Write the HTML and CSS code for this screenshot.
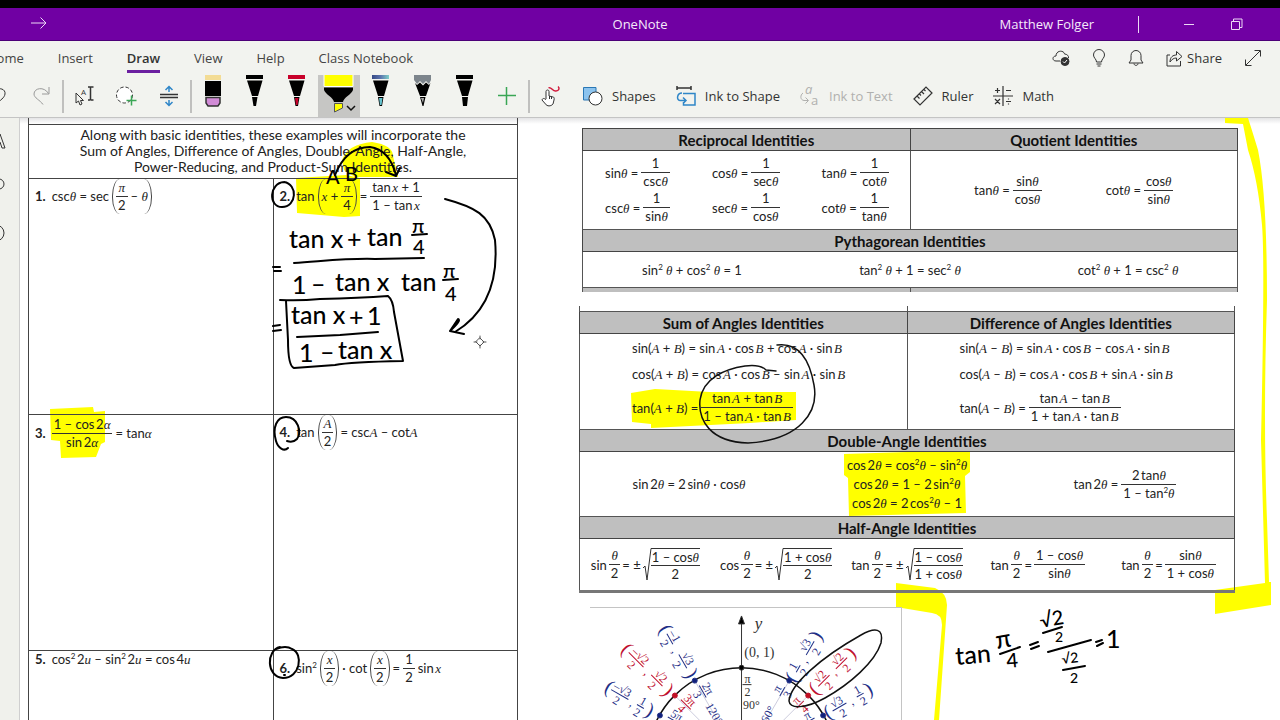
FILE: index.html
```html
<!DOCTYPE html>
<html lang="en">
  <head>
    <meta charset="UTF-8" />
    <meta name="viewport" content="width=device-width, initial-scale=1.0" />
    <title>OneNote</title>
    <link rel="stylesheet" href="styles.css">
  </head>
  <body>
    <header class="titlebar">
      <div class="history">
        <button class="icon-btn" aria-label="Forward">
          <svg width="16" height="12" viewBox="0 0 16 12"><path d="M0 6H15M9.500 .5L15 6L9.500 11.500" /></svg>
        </button>
      </div>
      <h1 class="app-name">OneNote</h1>
      <div class="account">
        <span>Matthew Folger</span>
        <span class="bar"></span>
        <button class="icon-btn" aria-label="Minimize">
          <svg width="12" height="12" viewBox="0 0 12 12"><path d="M1 6.500H11" /></svg>
        </button>
        <button class="icon-btn" aria-label="Restore">
          <svg width="12" height="12" viewBox="0 0 12 12"><path d="M.5 3.500H8.500V11.500H.5ZM2.500 3V1H11V9.500H9" /></svg>
        </button>
      </div>
    </header>

    <nav class="tabs">
      <a href="#home">Home</a>
      <a href="#insert">Insert</a>
      <a href="#draw" class="active">Draw</a>
      <a href="#view">View</a>
      <a href="#help">Help</a>
      <a href="#class">Class Notebook</a>
      <div class="tab-actions">
        <button class="icon-btn" aria-label="Sync status">
          <svg width="18" height="18" viewBox="0 0 18 18"><path d="M8 12H4C0 12 0 7 4 7C4 1 12 1 12.500 5C15 5 17 7 16.500 9" /><circle cx="13" cy="12.500" r="4" fill="#333" /><path class="white" d="M11 12.500L12.500 14L15 11" /></svg>
        </button>
        <button class="icon-btn" aria-label="Tips">
          <svg width="14" height="18" viewBox="0 0 14 18"><path d="M4.500 13C4.500 10 1.500 9 1.500 6A5.500 5.500 0 0 1 12.500 6C12.500 9 9.500 10 9.500 13ZM4.500 15H9.500M5.500 17H8.500" /></svg>
        </button>
        <button class="icon-btn" aria-label="Notifications">
          <svg width="16" height="18" viewBox="0 0 16 18"><path d="M1 14H15L13 11V6.500A5 5 0 0 0 3 6.500V11ZM6 14.500C6 17 10 17 10 14.500" /></svg>
        </button>
        <button class="share">
          <svg width="17" height="18" viewBox="0 0 17 18"><path d="M4 6H1V17H14.500V12M4 13C4 8 7 6 10.500 6V2.500L16 7.500L10.500 12V9C8 9 6 10 4 13Z" /></svg>
          Share
        </button>
        <button class="icon-btn" aria-label="Full screen">
          <svg width="18" height="18" viewBox="0 0 18 18"><path d="M2 16L16 2M10.500 1.500H16.500V7.500M1.500 10.500V16.500H7.500" /></svg>
        </button>
      </div>
    </nav>

    <div class="toolbar">
      <button class="tool undo" aria-label="Undo">
        <svg width="18" height="20" viewBox="0 0 18 20"><path d="M1 2V8H7M1.500 8C6 0 16 2 15 8C14.500 12 10 14 7 18" /></svg>
      </button>
      <button class="tool redo" aria-label="Redo">
        <svg width="18" height="20" viewBox="0 0 18 20"><path d="M17 1V8H10M16.500 7.500C12 0 2 2 2 8C2 12 8 14 11 18.500" /></svg>
      </button>
      <span class="divider"></span>
      <button class="tool" aria-label="Select objects or type text">
        <svg width="20" height="20" viewBox="0 0 20 20"><path d="M1 7V17L3.500 15L5 19L7 18L5.500 14.500H8.500Z" /><text class="tiny" x="6" y="9">A</text><path d="M13 1H15.500M18.500 1H16L15.500 1.500V13.500L15 14H13M16 14H18.500" stroke-width="1.500" /></svg>
      </button>
      <button class="tool" aria-label="Lasso select">
        <svg width="22" height="22" viewBox="0 0 22 22"><circle cx="8.500" cy="10" r="8" stroke-dasharray="3.500 2" fill="#fff" /><path class="green" d="M15.500 10.500V20.500M10.500 15.500H20.500" stroke-width="1.500" /></svg>
      </button>
      <button class="tool" aria-label="Insert space">
        <svg width="18" height="22" viewBox="0 0 18 22"><path d="M0 9.500H18M0 12.500H18" stroke-width="1.500" /><path class="blue" d="M9 7V1.500M5.500 5L9 1.500L12.500 5M9 15V20.500M5.500 17L9 20.500L12.500 17" stroke-width="1.500" /></svg>
      </button>
      <span class="divider"></span>
      <button class="tool pen" aria-label="Eraser">
        <svg width="18" height="34" viewBox="0 0 18 34"><path class="fill" fill="#f3dc95" d="M1 0H17V5H1Z" /><path class="fill" d="M1 6H17V21H1Z" /><path fill="#d18bd6" d="M2 22.500H16V28L14 31H4L2 28Z" stroke-width="1.500" /></svg>
      </button>
      <button class="tool pen" aria-label="Black pen">
        <svg width="18" height="34" viewBox="0 0 18 34"><path class="fill" d="M0 0H17V4H0ZM1 5.500H16.500L12 21H6ZM6 22H11.500L10 31H7.500Z" /></svg>
      </button>
      <button class="tool pen" aria-label="Red pen">
        <svg width="18" height="34" viewBox="0 0 18 34"><path class="fill" fill="#c8002a" d="M0 0H17V4H0Z" /><path class="fill" d="M1 5.500H16.500L12 21H6ZM6 22H11.500L10 31H7.500Z" /><path class="fill" fill="#c8002a" d="M7 23H10.500L9.500 30H8Z" /></svg>
      </button>
      <button class="tool pen selected" aria-label="Yellow highlighter">
        <svg width="36" height="38" viewBox="0 0 36 38"><path class="fill" fill="#ffff00" d="M3 0H32V11H3Z" /><path d="M3 0V11.500H32V0" stroke="#fff" /><path class="fill" d="M3 12.500H32V15C30 20 23 22 22 27H13C12 22 5 20 3 15Z" /><path fill="#ffff00" stroke="#555" d="M13.500 28.500H21.500V33L13.500 37Z" /><path d="M26 31L30 35L34 31" stroke="#111" stroke-width="1.500" /></svg>
      </button>
      <button class="tool pen" aria-label="Galaxy pen">
        <svg width="18" height="34" viewBox="0 0 18 34"><defs><linearGradient id="galaxy"><stop offset="0" stop-color="#364a86" /><stop offset=".5" stop-color="#5b73ad" /><stop offset="1" stop-color="#7fd0c8" /></linearGradient></defs><path class="fill" fill="url(#galaxy)" d="M0 0H17V4H0Z" /><path class="fill" d="M1 5.500H16.500L12 21H6ZM6 22H11.500L10 31H7.500Z" /><path class="fill" fill="#66c4cf" d="M7 23H10.500L9.500 30H8Z" /></svg>
      </button>
      <button class="tool pen" aria-label="Pencil">
        <svg width="18" height="34" viewBox="0 0 18 34"><path class="fill" fill="#7d858c" d="M0 0H17V5L15 9L12 6L9 9L6 6L3 9L0 5Z" /><path class="fill" d="M1 8L3 10L6 7.500L9 10.500L12 7.500L15 10L16.500 8L12 21H6ZM6 22H11.500L9.500 31H8.500Z" /><path class="fill" fill="#aaa" d="M7 23H10L9 28Z" /></svg>
      </button>
      <button class="tool pen" aria-label="Black marker">
        <svg width="18" height="34" viewBox="0 0 18 34"><path class="fill" d="M0 0H17V4H0ZM1 5.500H16.500L12 21H6ZM6 22H12L11 31H7Z" /></svg>
      </button>
      <button class="tool" aria-label="Add pen">
        <svg width="20" height="20" viewBox="0 0 20 20"><path class="green" d="M9.500 1V19M1 9.500H19" stroke-width="1.500" /></svg>
      </button>
      <span class="divider"></span>
      <button class="tool" aria-label="Draw with touch">
        <svg width="20" height="22" viewBox="0 0 20 22"><path d="M5 14V6.500C5 4.500 8 4.500 8 6.500V11L12 12C13 12 13.500 13 13 15L12 19C10 21.500 6 21.500 4.500 19L1 15C1.500 13 3.500 13 5 15" fill="#fff" /><path d="M8.500 11V14M10.500 11.500V14" /><path class="red" d="M7.500 3C10 1 12 7 15 6C18 6 19 3 17 1.500" stroke-width="1.500" /></svg>
      </button>
      <div class="labelled">
        <button class="text-tool">
          <svg width="20" height="20" viewBox="0 0 20 20"><path fill="#8cc3ee" stroke="#2a77b5" d="M.5 1.500H13V14H.5Z" /><circle cx="12.500" cy="12.500" r="6.500" fill="#fff" /></svg>
          Shapes
        </button>
        <button class="text-tool">
          <svg width="20" height="20" viewBox="0 0 20 20"><path d="M1 2H15M1 0V4M15 0V4" stroke-width="1.500" /><path class="blue" d="M7 7.500H19V19H7.500V16M6 7C1 7 0 14 4 14.500H9M7 11.500L10 14.500L7 17.500" stroke-width="1.500" /></svg>
          Ink to Shape
        </button>
        <button class="text-tool" disabled>
          <svg width="20" height="20" viewBox="0 0 20 20"><text class="letter slant" x="5" y="8">a</text><text class="letter" x="11" y="19">a</text><path d="M3 7C0 9 0 14 4 14.500H8M5.500 11.500L8.500 14.500L5.500 17.500" /></svg>
          Ink to Text
        </button>
        <button class="text-tool">
          <svg width="20" height="20" viewBox="0 0 20 20"><path d="M1 13L13 1L19 7L7 19ZM4 10L6.500 12.500M6.500 8L8 9.500M8.500 5.500L11 8M11 3.500L12.500 5" stroke-width="1.200" /></svg>
          Ruler
        </button>
        <button class="text-tool">
          <svg width="20" height="20" viewBox="0 0 20 20"><path d="M10 0V20M0 10H20M2 4.500H7M4.500 2V7M13 4.500H18M2 13L7 18M7 13L2 18M13 15.500H18M15.500 12.500V13.500M15.500 17.500V18.500" stroke-width="1.200" /></svg>
          Math
        </button>
      </div>
    </div>

    <main class="workspace">
      <aside class="rail">
        <svg width="20" height="140" viewBox="0 0 20 140"><path d="M-5 30L0 16L5 30H2L0 24" /><circle cx="-1" cy="66" r="5" /><circle cx="-4" cy="115" r="8" /></svg>
      </aside>

      <!-- highlighter strokes, kept below the print -->
      <svg class="ink highlight" width="1280" height="602" viewBox="0 118 1280 602">
        <path d="M296 178L346 175L360 178V216L344 217L297 213Z" />
        <path d="M342 160Q348 144 372 142Q393 145 393 156L398 177H355L344 170Z" />
        <path d="M50 409L93 407L94 412L105 411V442L101 444L96 457L61 458L60 441L51 440Z" />
        <path d="M631 393L655 389L710 392H796V420L750 423L651 428V424L632 422Z" />
        <path d="M844 454L970 450V472L965 476L966 513L849 516L848 478L844 475Z" />
        <path d="M1225 118H1248Q1251 127 1258 150Q1267 195 1267 300Q1263 420 1267 520L1269 582H1271V605L1215 614V590L1265 583L1261 440Q1265 260 1262 225Q1258 180 1248 150L1243 124L1225 123Z" />
        <path d="M896 583L935 588Q947 593 947 605L939 720H934L942 625Q942 614 932 613L896 607Z" />
      </svg>

      <table class="worksheet">
        <tr class="sliver"><td colspan="2"></td></tr>
        <tr class="intro">
          <th colspan="2">Along with basic identities, these examples will incorporate the<br>Sum of Angles, Difference of Angles, Double-Angle, Half-Angle,<br>Power-Reducing, and Product-Sum Identities.</th>
        </tr>
        <tr>
          <td><div class="eq"><b>1.</b><span>csc<i>θ</i> = sec</span><span class="group"><span class="frac"><i>π</i><span>2</span></span><span>– <i>θ</i></span></span></div></td>
          <td><div class="eq"><b>2.</b><span>tan</span><span class="group"><span><i>x</i> +</span><span class="frac"><i>π</i><span>4</span></span></span><span>=</span><span class="frac"><span>tan&thinsp;<i>x</i> + 1</span><span>1 – tan&thinsp;<i>x</i></span></span></div></td>
        </tr>
        <tr>
          <td class="low"><div class="eq"><b>3.</b><span class="frac"><span>1 – cos&thinsp;2<i>α</i></span><span>sin&thinsp;2<i>α</i></span></span><span>= tan<i>α</i></span></div></td>
          <td><div class="eq"><b>4.</b><span>tan</span><span class="group"><span class="frac"><i>A</i><span>2</span></span></span><span>= csc<i>A</i> – cot<i>A</i></span></div></td>
        </tr>
        <tr>
          <td><div class="eq"><b>5.</b><span>cos<sup>2</sup>&thinsp;2<i>u</i> – sin<sup>2</sup>&thinsp;2<i>u</i> = cos&thinsp;4<i>u</i></span></div></td>
          <td><div class="eq"><b>6.</b><span>sin<sup>2</sup></span><span class="group"><span class="frac"><i>x</i><span>2</span></span></span><span>· cot</span><span class="group"><span class="frac"><i>x</i><span>2</span></span></span><span>=</span><span class="frac"><span>1</span><span>2</span></span><span>sin&thinsp;<i>x</i></span></div></td>
        </tr>
      </table>

      <div class="references">
        <table class="sheet reciprocal">
          <tr><th>Reciprocal Identities</th><th>Quotient Identities</th></tr>
          <tr class="tall">
            <td>
              <div class="thirds">
                <span class="eq"><span>sin<i>θ</i> =</span><span class="frac"><span>1</span><span>csc<i>θ</i></span></span></span>
                <span class="eq"><span>cos<i>θ</i> =</span><span class="frac"><span>1</span><span>sec<i>θ</i></span></span></span>
                <span class="eq"><span>tan<i>θ</i> =</span><span class="frac"><span>1</span><span>cot<i>θ</i></span></span></span>
                <span class="eq"><span>csc<i>θ</i> =</span><span class="frac"><span>1</span><span>sin<i>θ</i></span></span></span>
                <span class="eq"><span>sec<i>θ</i> =</span><span class="frac"><span>1</span><span>cos<i>θ</i></span></span></span>
                <span class="eq"><span>cot<i>θ</i> =</span><span class="frac"><span>1</span><span>tan<i>θ</i></span></span></span>
              </div>
            </td>
            <td>
              <div class="spread">
                <span class="eq"><span>tan<i>θ</i> =</span><span class="frac"><span>sin<i>θ</i></span><span>cos<i>θ</i></span></span></span>
                <span class="eq"><span>cot<i>θ</i> =</span><span class="frac"><span>cos<i>θ</i></span><span>sin<i>θ</i></span></span></span>
              </div>
            </td>
          </tr>
          <tr><th colspan="2">Pythagorean Identities</th></tr>
          <tr class="short">
            <td colspan="2">
              <div class="thirds">
                <span>sin<sup>2</sup> <i>θ</i> + cos<sup>2</sup> <i>θ</i> = 1</span>
                <span>tan<sup>2</sup> <i>θ</i> + 1 = sec<sup>2</sup> <i>θ</i></span>
                <span>cot<sup>2</sup> <i>θ</i> + 1 = csc<sup>2</sup> <i>θ</i></span>
              </div>
            </td>
          </tr>
          <tr class="cut"><td></td><td></td></tr>
        </table>

        <table class="sheet angles">
          <tr class="gap"><td></td><td></td></tr>
          <tr><th>Sum of Angles Identities</th><th>Difference of Angles Identities</th></tr>
          <tr class="sums">
            <td>
              <div class="lines">
                <span>sin(<i>A</i> + <i>B</i>) = sin&thinsp;<i>A</i> · cos&thinsp;<i>B</i> + cos&thinsp;<i>A</i> · sin&thinsp;<i>B</i></span>
                <span>cos(<i>A</i> + <i>B</i>) = cos&thinsp;<i>A</i> · cos&thinsp;<i>B</i> – sin&thinsp;<i>A</i> · sin&thinsp;<i>B</i></span>
                <span class="eq"><span>tan(<i>A</i> + <i>B</i>) =</span><span class="frac"><span>tan&thinsp;<i>A</i> + tan&thinsp;<i>B</i></span><span>1 – tan&thinsp;<i>A</i> · tan&thinsp;<i>B</i></span></span></span>
              </div>
            </td>
            <td>
              <div class="lines">
                <span>sin(<i>A</i> – <i>B</i>) = sin&thinsp;<i>A</i> · cos&thinsp;<i>B</i> – cos&thinsp;<i>A</i> · sin&thinsp;<i>B</i></span>
                <span>cos(<i>A</i> – <i>B</i>) = cos&thinsp;<i>A</i> · cos&thinsp;<i>B</i> + sin&thinsp;<i>A</i> · sin&thinsp;<i>B</i></span>
                <span class="eq"><span>tan(<i>A</i> – <i>B</i>) =</span><span class="frac"><span>tan&thinsp;<i>A</i> – tan&thinsp;<i>B</i></span><span>1 + tan&thinsp;<i>A</i> · tan&thinsp;<i>B</i></span></span></span>
              </div>
            </td>
          </tr>
          <tr><th colspan="2">Double-Angle Identities</th></tr>
          <tr class="double">
            <td colspan="2">
              <div class="thirds">
                <span>sin&thinsp;2<i>θ</i> = 2&thinsp;sin<i>θ</i> · cos<i>θ</i></span>
                <span class="stack"><span>cos&thinsp;2<i>θ</i> = cos<sup>2</sup><i>θ</i> – sin<sup>2</sup><i>θ</i></span><span>cos&thinsp;2<i>θ</i> = 1 – 2&thinsp;sin<sup>2</sup><i>θ</i></span><span>cos&thinsp;2<i>θ</i> = 2&thinsp;cos<sup>2</sup><i>θ</i> – 1</span></span>
                <span class="eq"><span>tan&thinsp;2<i>θ</i> =</span><span class="frac"><span>2&thinsp;tan<i>θ</i></span><span>1 – tan<sup>2</sup><i>θ</i></span></span></span>
              </div>
            </td>
          </tr>
          <tr><th colspan="2">Half-Angle Identities</th></tr>
          <tr class="half">
            <td colspan="2">
              <div class="fifths">
                <span class="eq"><span>sin</span><span class="frac"><i>θ</i><span>2</span></span><span>= ±</span><span class="root"><svg width="8" height="33" viewBox="0 0 8 33"><path d="M0 20L2 18L4 32L8 .5" /></svg><span class="frac"><span>1 – cos<i>θ</i></span><span>2</span></span></span></span>
                <span class="eq"><span>cos</span><span class="frac"><i>θ</i><span>2</span></span><span>= ±</span><span class="root"><svg width="8" height="33" viewBox="0 0 8 33"><path d="M0 20L2 18L4 32L8 .5" /></svg><span class="frac"><span>1 + cos<i>θ</i></span><span>2</span></span></span></span>
                <span class="eq"><span>tan</span><span class="frac"><i>θ</i><span>2</span></span><span>= ±</span><span class="root"><svg width="8" height="33" viewBox="0 0 8 33"><path d="M0 20L2 18L4 32L8 .5" /></svg><span class="frac"><span>1 – cos<i>θ</i></span><span>1 + cos<i>θ</i></span></span></span></span>
                <span class="eq"><span>tan</span><span class="frac"><i>θ</i><span>2</span></span><span>=</span><span class="frac"><span>1 – cos<i>θ</i></span><span>sin<i>θ</i></span></span></span>
                <span class="eq"><span>tan</span><span class="frac"><i>θ</i><span>2</span></span><span>=</span><span class="frac"><span>sin<i>θ</i></span><span>1 + cos<i>θ</i></span></span></span>
              </div>
            </td>
          </tr>
        </table>

        <svg class="unit-circle" width="312" height="200" viewBox="590 607 312 200">
          <circle cx="742" cy="762" r="95" class="ring" />
          <path class="spoke" d="M742 762L695 680M742 762L675 695M742 762L790 680M742 762L809 695" />
          <path d="M742 807V618" />
          <path class="dot" d="M742 615L739 623H745Z" />
          <circle class="dot" cx="742" cy="667" r="2.500" />
          <g class="navy">
            <circle cx="695" cy="680" r="2.500" /><circle cx="790" cy="680" r="2.500" /><circle cx="660" cy="715" r="2.500" /><circle cx="824" cy="715" r="2.500" />
          </g>
          <g class="crimson"><circle cx="675" cy="695" r="2.500" /><circle cx="809" cy="695" r="2.500" /></g>
          <text class="axis" x="759" y="628">y</text>
          <text class="point" x="760" y="656">(0, 1)</text>
          <text x="748" y="682">π</text><path d="M743 684H752" /><text x="748" y="695">2</text>
          <text x="752" y="709">90°</text>
          <g class="navy">
            <g transform="translate(806 656) rotate(-60)"><text class="paren" x="-25" y="5">(</text><text x="-14" y="-2">1</text><path d="M-18 0H-10" /><text x="-14" y="11">2</text><text x="-4" y="5">,</text><text x="10" y="-2">√3</text><path d="M2 0H18" /><text x="10" y="11">2</text><text class="paren" x="24" y="5">)</text></g>
            <g transform="translate(850 701) rotate(-30)"><text class="paren" x="-24" y="5">(</text><text x="-11" y="-2">√3</text><path d="M-19 0H-3" /><text x="-11" y="11">2</text><text x="2" y="5">,</text><text x="13" y="-2">1</text><path d="M9 0H17" /><text x="13" y="11">2</text><text class="paren" x="23" y="5">)</text></g>
            <g transform="translate(678 652) rotate(60)"><text class="paren" x="-27" y="5">(</text><text x="-16" y="-2">–1</text><path d="M-22 0H-10" /><text x="-15" y="11">2</text><text x="-3" y="5">,</text><text x="10" y="-2">√3</text><path d="M2 0H18" /><text x="10" y="11">2</text><text class="paren" x="25" y="5">)</text></g>
            <g transform="translate(630 700) rotate(30)"><text class="paren" x="-25" y="5">(</text><text x="-12" y="-2">–√3</text><path d="M-22 0H-2" /><text x="-12" y="11">2</text><text x="3" y="5">,</text><text x="12" y="-2">1</text><path d="M8 0H16" /><text x="12" y="11">2</text><text class="paren" x="22" y="5">)</text></g>
            <g transform="translate(783 691) rotate(-60)"><text y="-2">π</text><path d="M-5 0H5" /><text y="10">3</text></g>
            <g transform="translate(703 691) rotate(60)"><text y="-2">2π</text><path d="M-7 0H7" /><text y="10">3</text></g>
            <g transform="translate(674 720) rotate(30)"><text y="-2">5π</text><path d="M-7 0H7" /></g>
            <g transform="translate(811 720) rotate(-30)"><text y="-2">π</text><path d="M-5 0H5" /></g>
            <text transform="translate(711 715) rotate(60)">120°</text>
            <text transform="translate(772 716) rotate(-60)">60°</text>
          </g>
          <g class="crimson">
            <g transform="translate(834 671) rotate(-45)"><text class="paren" x="-26" y="5">(</text><text x="-13" y="-2">√2</text><path d="M-21 0H-5" /><text x="-13" y="11">2</text><text x="0" y="5">,</text><text x="12" y="-2">√2</text><path d="M4 0H20" /><text x="12" y="11">2</text><text class="paren" x="26" y="5">)</text></g>
            <g transform="translate(647 670) rotate(45)"><text class="paren" x="-30" y="5">(</text><text x="-15" y="-2">–√2</text><path d="M-26 0H-5" /><text x="-15" y="11">2</text><text x="1" y="5">,</text><text x="14" y="-2">√2</text><path d="M6 0H22" /><text x="14" y="11">2</text><text class="paren" x="29" y="5">)</text></g>
            <g transform="translate(801 704) rotate(-45)"><text y="-2">π</text><path d="M-5 0H5" /><text y="10">4</text></g>
            <g transform="translate(686 704) rotate(45)"><text y="-2">3π</text><path d="M-7 0H7" /><text y="10">4</text></g>
          </g>
        </svg>
      </div>

      <!-- pen strokes -->
      <svg class="ink pen-ink" width="1280" height="602" viewBox="0 118 1280 602">
        <path d="M284 182C269 183 268 207 282 207C297 207 298 184 284 182" />
        <path d="M335 175C345 150 360 147 370 147C385 149 392 160 396 175M386 172L396 176L400 168" />
        <path d="M445 199C475 207 490 215 495 240C499 285 483 315 455 332M464 334L450 331L458 319Q462 320 450 331" />
        <path d="M294 263C325 261 350 258 375 259L424 258" />
        <path d="M412 235L427 234M443 280L458 279M273 267H280M274 271H281M273 326L280 325M273 331L281 330" />
        <path d="M280 300Q300 301 320 299Q360 298 388 296Q393 300 394 312L403 361Q350 362 335 365L294 368Q288 366 288 340L286 301" />
        <path d="M297 337L340 335L378 332" />
        <path d="M288 448C284 452 278 448 276 441C272 427 277 417 286 417C298 417 302 432 297 439Q293 443 287 441" />
        <path d="M280 647C266 650 266 677 283 678C300 678 304 654 292 649Q286 645 276 649M284 675H285" />
        <path class="thin" d="M777 345C800 342 810 362 814 385C819 412 800 440 748 443C710 442 698 420 700 400C703 378 725 369 745 366Q760 364 766 370L776 371" />
        <path class="thin" d="M861 635C875 627 884 628 881 643C875 662 850 684 825 698C805 709 790 709 789 701C790 685 820 658 861 635" />
        <path d="M1000 654L1020 647M1030 645L1038 642M1031 649L1039 646M1043 633L1062 627M1048 652L1091 640M1063 670L1085 666M1096 642L1102 640M1097 646L1103 643" />
        <text class="hand large" x="289" y="248">tan x</text>
        <text class="hand large" x="347" y="248">+</text>
        <text class="hand large" x="367" y="246">tan</text>
        <text class="hand" x="412" y="233">π</text>
        <text class="hand" x="413" y="254">4</text>
        <text class="hand large" x="292" y="294">1</text>
        <text class="hand large" x="311" y="293">–</text>
        <text class="hand large" x="335" y="291">tan x</text>
        <text class="hand large" x="401" y="291">tan</text>
        <text class="hand" x="443" y="278">π</text>
        <text class="hand" x="445" y="301">4</text>
        <text class="hand large" x="291" y="324">tan x</text>
        <text class="hand large" x="349" y="326">+</text>
        <text class="hand large" x="367" y="325">1</text>
        <text class="hand large" x="299" y="362">1</text>
        <text class="hand large" x="320" y="361">–</text>
        <text class="hand large" x="338" y="359">tan x</text>
        <text class="hand" x="326" y="184">A</text>
        <text class="hand" x="345" y="181">B</text>
        <text class="hand large" transform="translate(956 665) rotate(-5)">tan</text>
        <text class="hand large" transform="translate(997 649) rotate(-10)">π</text>
        <text class="hand" transform="translate(1007 668) rotate(-5)">4</text>
        <text class="hand" transform="translate(1041 628) rotate(-10)">√2</text>
        <text class="hand small" x="1055" y="642">2</text>
        <text class="hand small" transform="translate(1062 664) rotate(-6)">√2</text>
        <text class="hand small" x="1070" y="683">2</text>
        <text class="hand large" x="1106" y="648">1</text>
        <path class="cursor" d="M480 338L484 342L480 346L476 342ZM480 336V339M480 345V348M474 342H477M483 342H486" />
      </svg>
    </main>
  </body>
</html>
```

FILE: styles.css
```css
* {
  box-sizing: border-box;
}
body {
  margin: 0;
  height: 100vh;
  display: flex;
  flex-direction: column;
  overflow: hidden;
  border-top: 8px solid #000;
  background: #fff;
  color: #333;
  font-family: "Open Sans", "Noto Sans", sans-serif;
  font-size: 13px;
}
button {
  border: 0;
  padding: 0;
  background: none;
  color: inherit;
  font: inherit;
}
svg {
  display: block;
  overflow: visible;
  fill: none;
  stroke: #333;
}
svg text {
  stroke: none;
  fill: currentColor;
}
svg .fill {
  stroke: none;
}
svg .fill:not([fill]) {
  fill: #000;
}
svg .green {
  stroke: #3aa655;
}
svg .blue {
  stroke: #2f86c8;
}
svg .red {
  stroke: #d1183a;
}
svg .white {
  stroke: #fff;
}

/* title bar */
.titlebar {
  display: grid;
  grid-template-columns: 1fr auto 1fr;
  align-items: center;
  flex: none;
  height: 33px;
  background: #7000a3;
  border-bottom: 1px solid #4c0078;
  color: #f5eafa;
}
.titlebar svg {
  stroke: #ecd9f5;
}
.history {
  padding-left: 31px;
}
.app-name {
  margin: 0;
  font-size: 13px;
  font-weight: 400;
}
.account {
  display: flex;
  justify-content: flex-end;
  align-items: center;
  padding-right: 37px;
}
.account .bar {
  width: 1px;
  height: 17px;
  margin: 0 44px;
  background: #ecd9f5;
}
.account .icon-btn + .icon-btn {
  margin-left: 36px;
}

/* ribbon tabs */
.tabs {
  display: flex;
  align-items: center;
  flex: none;
  gap: 34px;
  height: 34px;
  padding-right: 18px;
  background: #f2f3ef;
}
.tabs a {
  height: 34px;
  line-height: 34px;
  color: #444;
  text-decoration: none;
  white-space: nowrap;
}
.tabs a:first-child {
  margin-left: -13px;
}
.tabs .active {
  font-weight: 600;
  color: #333;
  background: linear-gradient(#6b1fa0, #6b1fa0) 0 29px / 100% 3px no-repeat;
}
.tab-actions {
  display: flex;
  align-items: center;
  gap: 22px;
  margin-left: auto;
}
.share {
  display: flex;
  align-items: center;
  gap: 4px;
}

/* drawing tools */
.toolbar {
  display: flex;
  align-items: center;
  flex: none;
  height: 43px;
  background: #f2f3ef;
  border-bottom: 1px solid #c4c4c4;
}
.tool {
  display: flex;
  justify-content: center;
  align-items: center;
  flex: none;
  width: 42px;
  height: 42px;
}
.undo {
  margin-left: -22px;
}
.redo svg {
  stroke: #999;
}
.divider {
  flex: none;
  width: 2px;
  height: 33px;
  background: #c0c0be;
}
.pen {
  align-items: flex-start;
}
.pen.selected {
  background: #c6c6c4;
}
.labelled {
  display: flex;
  gap: 20px;
  margin-left: 11px;
}
.text-tool {
  display: flex;
  align-items: center;
  gap: 9px;
  white-space: nowrap;
}
.text-tool:disabled {
  color: #b0b0ae;
}
.text-tool:disabled svg {
  stroke: #b0b0ae;
}
.tiny {
  font-size: 8px;
}
.letter {
  font-size: 13px;
}
.slant {
  font-style: italic;
}

/* note canvas */
.workspace {
  position: relative;
  display: flex;
  align-items: flex-start;
  flex: 1;
  min-height: 0;
  overflow: hidden;
  background: linear-gradient(#e4e4e6, #fff 6px);
  color: #222;
  font-family: Lato, sans-serif;
  font-size: 13px;
}
.rail {
  align-self: stretch;
  flex: none;
  width: 20px;
  margin-right: 8px;
  background: #f0f1ec;
  border-right: 1px solid #cfcfcf;
}
.ink {
  position: absolute;
  top: 0;
  left: 0;
  pointer-events: none;
}
.highlight {
  fill: #ffff00;
  stroke: none;
}
.pen-ink {
  z-index: 2;
  stroke: #000;
  stroke-width: 2;
  stroke-linecap: round;
  stroke-linejoin: round;
}
.pen-ink .thin {
  stroke: #111;
  stroke-width: 1.500;
}
.pen-ink .cursor {
  stroke: #555;
  stroke-width: 1;
}
.hand {
  fill: #000;
  font-size: 20px;
  font-weight: 500;
}
.hand.large {
  font-size: 25px;
}
.hand.small {
  font-size: 14px;
}

/* formulas */
i {
  font-family: "Liberation Serif", serif;
  line-height: 0;
}
sup {
  font-size: 8px;
  line-height: 0;
}
.eq {
  display: inline-flex;
  align-items: center;
  gap: 3px;
  white-space: nowrap;
}
.frac {
  display: inline-flex;
  flex-direction: column;
  text-align: center;
  line-height: 17px;
}
.frac > * {
  padding: 0 2px;
  line-height: 17px;
}
.frac > :first-child {
  border-bottom: 1px solid #333;
}
.group {
  display: inline-flex;
  align-items: center;
  gap: 3px;
  padding: 0 3px;
  border: solid #444;
  border-width: 0 1px;
  border-radius: 8px / 17px;
}
.root {
  display: inline-flex;
}
.root .frac {
  border-top: 1px solid #333;
}
.root .frac > * {
  padding: 0 1px;
  line-height: 16px;
}

/* worksheet */
.worksheet {
  position: relative;
  z-index: 1;
  flex: none;
  width: 490px;
  table-layout: fixed;
  border-collapse: collapse;
  font-size: 13px;
}
.worksheet td,
.worksheet th {
  height: 236px;
  padding: 0 6px;
  border: 1px solid #444;
  vertical-align: top;
}
.worksheet .low {
  padding-top: 1px;
}
.worksheet .sliver td {
  height: 6px;
  padding: 0;
  border-top: 0;
}
.worksheet .intro th {
  height: 54px;
  padding: 2px 0;
  font-size: 14px;
  font-weight: 400;
  line-height: 16px;
}
.worksheet b {
  margin-right: 3px;
}

/* identity sheets */
.references {
  position: relative;
  z-index: 1;
  flex: none;
  width: 658px;
  margin: 10px 0 0 61px;
}
.sheet {
  width: 656px;
  table-layout: fixed;
  border-collapse: collapse;
  font-size: 13px;
}
.sheet th {
  height: 22px;
  padding: 0;
  border: 1px solid #444;
  background: #bfbfbf;
  color: #111;
  font-size: 15px;
  line-height: 20px;
}
.sheet td {
  padding: 0;
  border: 1px solid #555;
}
.reciprocal {
  margin-left: 3px;
}
.tall td {
  height: 79px;
}
.short td {
  height: 36px;
}
.sheet .cut td {
  height: 4px;
  border-bottom: 0;
  background: #bfbfbf;
}
.angles {
  margin-top: 14px;
  border-bottom: 3px solid #777;
}
.sheet .gap td {
  height: 6px;
  border-top: 0;
}
.sums td {
  height: 96px;
}
.double td {
  height: 65px;
}
.half td {
  height: 53px;
}
.thirds {
  display: grid;
  grid-template-columns: repeat(3, 1fr);
  place-items: center;
}
.fifths {
  display: grid;
  grid-template-columns: repeat(5, 1fr);
  place-items: center;
}
.fifths .eq {
  gap: 2px;
}
.spread {
  display: flex;
  justify-content: space-evenly;
}
.lines {
  display: flex;
  flex-direction: column;
  align-items: flex-start;
  gap: 6px;
  padding-left: 52px;
  line-height: 20px;
}
.stack {
  display: flex;
  flex-direction: column;
  align-items: center;
  line-height: 19px;
}

/* unit circle */
.unit-circle {
  margin: 14px 0 0 11px;
  overflow: hidden;
  border: solid #c4c4c4;
  border-width: 1px 1px 0 0;
  color: #333;
  font-family: "Liberation Serif", serif;
  font-size: 12px;
  text-anchor: middle;
}
.unit-circle .ring {
  stroke: #111;
  stroke-width: 1.500;
}
.unit-circle .spoke {
  stroke: #ccd;
}
.unit-circle .dot {
  fill: #000;
}
.unit-circle .axis {
  font-size: 17px;
  font-style: italic;
}
.unit-circle .point {
  font-size: 14px;
}
.unit-circle .paren {
  font-size: 20px;
}
.navy {
  color: #1f2f86;
  stroke: #1f2f86;
}
.crimson {
  color: #c01030;
  stroke: #c01030;
}
.navy circle {
  fill: #10207a;
}
.crimson circle {
  fill: #c01020;
}
```
